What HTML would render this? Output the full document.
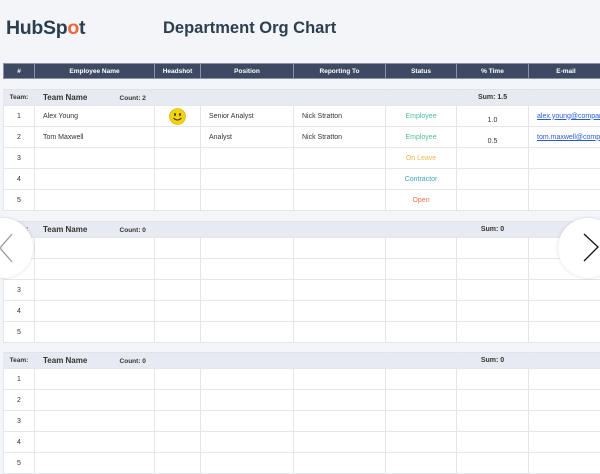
<!DOCTYPE html>
<html><head><meta charset="utf-8"><style>
*{margin:0;padding:0;box-sizing:border-box}
body{width:600px;height:463px;overflow:hidden;background:#f3f5f8;font-family:"Liberation Sans",sans-serif;position:relative;color:#333}
.logo{position:absolute;left:6px;top:17px;font-size:19.5px;color:#2d3e50;font-weight:bold;letter-spacing:-0.3px}
.title{position:absolute;left:163px;top:19px;font-size:16.5px;color:#2d3e50;font-weight:bold}
table{position:absolute;left:3px;border-collapse:collapse;table-layout:fixed;width:600px}
td,th{border:1px solid #e3e6ec;font-size:7px;height:21px;overflow:hidden;white-space:nowrap}
th{background:#3e4a63;color:#fff;height:15px;border:1px solid #8a93a6;font-weight:bold;font-size:6.5px}
td{background:#fff}
tr.team td{background:#e7eaf0;height:16px;font-weight:bold;color:#333;border-left-color:#e7eaf0;border-right-color:#e7eaf0;border-top-color:#e0e3ea}
.c{text-align:center}
.circ{position:absolute;width:60px;height:60px;border-radius:50%;background:#fff;box-shadow:0 0 3px rgba(0,0,0,.15);top:218px}
</style></head><body>
<div class="logo">HubSp<span style="color:#f0673a">o</span>t</div>
<div class="title">Department Org Chart</div>

<table style="top:63px">
<colgroup><col style="width:31px"><col style="width:120px"><col style="width:46px"><col style="width:93px"><col style="width:92px"><col style="width:71px"><col style="width:72px"><col style="width:75px"></colgroup>
<tr><th>#</th><th>Employee Name</th><th>Headshot</th><th>Position</th><th>Reporting To</th><th>Status</th><th>% Time</th><th>E-mail</th></tr>
</table>

<table style="top:89px">
<colgroup><col style="width:31px"><col style="width:120px"><col style="width:46px"><col style="width:93px"><col style="width:92px"><col style="width:71px"><col style="width:72px"><col style="width:75px"></colgroup>
<tr class="team"><td class="c" style="font-size:6.5px">Team:</td><td colspan="4" style="padding-left:8px;font-size:8px">Team Name <span style="margin-left:30px;font-size:6.5px">Count: 2</span></td><td></td><td class="c">Sum: 1.5</td><td></td></tr>
<tr><td class="c">1</td><td style="padding-left:8px">Alex Young</td><td class="c"><svg width="17" height="17" viewBox="0 0 17 17" style="vertical-align:middle"><circle cx="8.5" cy="8.5" r="8" fill="#f3d400" stroke="#c9a800" stroke-width=".6"/><ellipse cx="6" cy="6.5" rx=".9" ry="1.5" fill="#333"/><ellipse cx="11" cy="6.5" rx=".9" ry="1.5" fill="#333"/><path d="M4.5 10 Q8.5 14 12.5 10" fill="none" stroke="#333" stroke-width=".9"/></svg></td><td style="padding-left:8px">Senior Analyst</td><td style="padding-left:8px">Nick Stratton</td><td class="c" style="color:#4fbf9f">Employee</td><td class="c" style="padding-top:8px">1.0</td><td style="padding-left:8px;color:#2a5bd7;text-decoration:underline">alex.young@company</td></tr>
<tr><td class="c">2</td><td style="padding-left:8px">Tom Maxwell</td><td></td><td style="padding-left:8px">Analyst</td><td style="padding-left:8px">Nick Stratton</td><td class="c" style="color:#4fbf9f">Employee</td><td class="c" style="padding-top:8px">0.5</td><td style="padding-left:8px;color:#2a5bd7;text-decoration:underline">tom.maxwell@company</td></tr>
<tr><td class="c">3</td><td></td><td></td><td></td><td></td><td class="c" style="color:#f0b84a">On Leave</td><td></td><td></td></tr>
<tr><td class="c">4</td><td></td><td></td><td></td><td></td><td class="c" style="color:#3fa3b8">Contractor</td><td></td><td></td></tr>
<tr><td class="c">5</td><td></td><td></td><td></td><td></td><td class="c" style="color:#f0734f">Open</td><td></td><td></td></tr>
</table>

<table style="top:221px">
<colgroup><col style="width:31px"><col style="width:120px"><col style="width:46px"><col style="width:93px"><col style="width:92px"><col style="width:71px"><col style="width:72px"><col style="width:75px"></colgroup>
<tr class="team"><td class="c" style="font-size:6.5px">Team:</td><td colspan="4" style="padding-left:8px;font-size:8px">Team Name <span style="margin-left:30px;font-size:6.5px">Count: 0</span></td><td></td><td class="c">Sum: 0</td><td></td></tr>
<tr><td class="c">1</td><td></td><td></td><td></td><td></td><td></td><td></td><td></td></tr>
<tr><td class="c">2</td><td></td><td></td><td></td><td></td><td></td><td></td><td></td></tr>
<tr><td class="c">3</td><td></td><td></td><td></td><td></td><td></td><td></td><td></td></tr>
<tr><td class="c">4</td><td></td><td></td><td></td><td></td><td></td><td></td><td></td></tr>
<tr><td class="c">5</td><td></td><td></td><td></td><td></td><td></td><td></td><td></td></tr>
</table>

<table style="top:352px">
<colgroup><col style="width:31px"><col style="width:120px"><col style="width:46px"><col style="width:93px"><col style="width:92px"><col style="width:71px"><col style="width:72px"><col style="width:75px"></colgroup>
<tr class="team"><td class="c" style="font-size:6.5px">Team:</td><td colspan="4" style="padding-left:8px;font-size:8px">Team Name <span style="margin-left:30px;font-size:6.5px">Count: 0</span></td><td></td><td class="c">Sum: 0</td><td></td></tr>
<tr><td class="c">1</td><td></td><td></td><td></td><td></td><td></td><td></td><td></td></tr>
<tr><td class="c">2</td><td></td><td></td><td></td><td></td><td></td><td></td><td></td></tr>
<tr><td class="c">3</td><td></td><td></td><td></td><td></td><td></td><td></td><td></td></tr>
<tr><td class="c">4</td><td></td><td></td><td></td><td></td><td></td><td></td><td></td></tr>
<tr><td class="c">5</td><td></td><td></td><td></td><td></td><td></td><td></td><td></td></tr>
</table>

<div class="circ" style="left:-27px"></div>
<div class="circ" style="left:558px"></div>
<svg style="position:absolute;left:0;top:0" width="600" height="463">
<polyline points="12,234 0,248 12,262" fill="none" stroke="#999" stroke-width="1.3"/>
<polyline points="584,234 598,247 584,261" fill="none" stroke="#111" stroke-width="1.3"/>
</svg>
</body></html>
